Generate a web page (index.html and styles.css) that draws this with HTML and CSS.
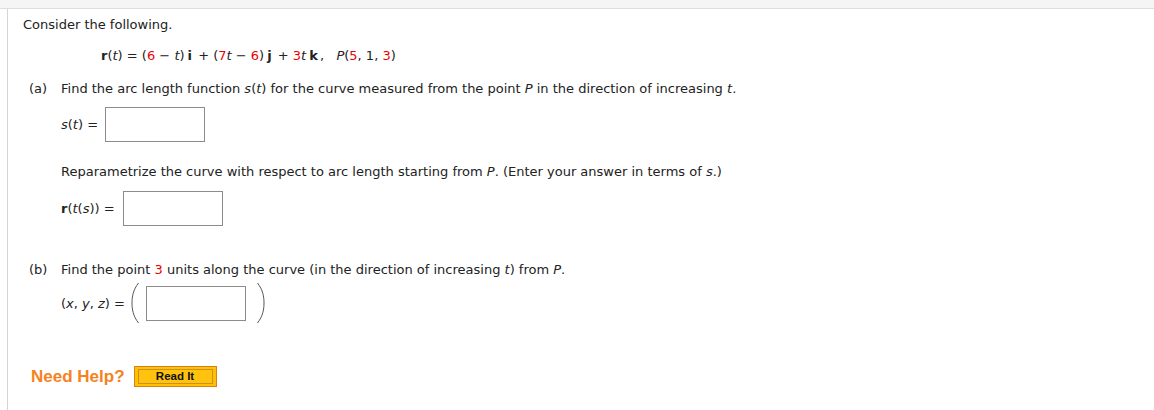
FILE: index.html
```html
<!DOCTYPE html>
<html>
<head>
<meta charset="utf-8">
<link rel="stylesheet" href="styles.css">
</head>
<body>
<div class="topbar"></div>
<div class="panel">
  <p class="intro">Consider the following.</p>
  <p class="equation"><b>r</b>(<i>t</i>) = (<span class="red">6</span> &minus; <i>t</i>)<b class="vec">i</b> + (<span class="red">7</span><i>t</i> &minus; <span class="red">6</span>)<b class="vec">j</b> + <span class="red">3</span><i>t</i><b class="vec">k</b>,&nbsp;&nbsp; <i>P</i>(<span class="red">5</span>, 1, <span class="red">3</span>)</p>

  <div class="part">
    <span class="label">(a)</span>
    <div class="body">
      <p class="q">Find the arc length function <i>s</i>(<i>t</i>) for the curve measured from the point <i>P</i> in the direction of increasing <i>t</i>.</p>
      <div class="answer a1"><span class="lhs"><i>s</i>(<i>t</i>) =</span><span class="box"></span></div>
      <p class="q q2">Reparametrize the curve with respect to arc length starting from <i>P</i>. (Enter your answer in terms of <i>s</i>.)</p>
      <div class="answer a2"><span class="lhs"><b>r</b>(<i>t</i>(<i>s</i>)) =</span><span class="box"></span></div>
    </div>
  </div>

  <div class="part partb">
    <span class="label">(b)</span>
    <div class="body">
      <p class="q">Find the point <span class="red">3</span> units along the curve (in the direction of increasing <i>t</i>) from <i>P</i>.</p>
      <div class="answer a3">
        <span class="lhs">(<i>x</i>, <i>y</i>, <i>z</i>) =</span>
        <svg class="paren" width="9" height="42" viewBox="0 0 9 42"><path d="M7.5 1 C2 8 1 15 1 21 C1 27 2 34 7.5 41" fill="none" stroke="#555" stroke-width="1"/></svg>
        <span class="box"></span>
        <svg class="paren pr" width="9" height="42" viewBox="0 0 9 42"><path d="M1.5 1 C7 8 8 15 8 21 C8 27 7 34 1.5 41" fill="none" stroke="#555" stroke-width="1"/></svg>
      </div>
    </div>
  </div>

  <div class="help">
    <span class="need">Need Help?</span>
    <span class="btn"><span class="btn-in">Read It</span></span>
  </div>
</div>
</body>
</html>
```

FILE: styles.css
```css
html, body {
  margin: 0;
  padding: 0;
  background: #fff;
}
body {
  font-family: "DejaVu Sans", Verdana, sans-serif;
  font-size: 13px;
  color: #222;
  height: 410px;
  overflow: hidden;
}
.topbar {
  height: 8px;
  background: #f5f5f5;
  border-bottom: 1px solid #dedede;
}
.panel {
  margin-left: 7px;
  border-left: 1px solid #d4d4d4;
  padding: 8px 0 0 15px;
  height: 401px;
  box-sizing: border-box;
}
p {
  margin: 0;
  line-height: 16px;
}
.red { color: #e00; }
.equation {
  margin-top: 15px;
  padding-left: 78px;
}
.vec { margin: 0 2px 0 3px; }
.part {
  display: flex;
  margin-top: 17px;
  padding-left: 6px;
}
.partb { margin-top: 36px; }
.label {
  width: 32px;
  line-height: 16px;
  flex: none;
}
.body {
  display: flex;
  flex-direction: column;
}
.answer {
  display: flex;
  align-items: center;
  margin-top: 10px;
}
.q2 { margin-top: 22px; }
.a2 { margin-top: 11px; }
.lhs {
  margin-right: 7px;
}
.a2 .lhs { margin-right: 8px; }
.box {
  display: block;
  width: 98px;
  height: 33px;
  border: 1px solid #8c8c8c;
  background: #fff;
}
.a3 { margin-top: 4px; }
.a3 .lhs { margin-right: 6px; }
.paren { display: block; margin-right: 6px; }
.paren.pr { margin-left: 10px; margin-right: 0; }
.help {
  display: flex;
  align-items: center;
  margin-top: 42px;
  padding-left: 8px;
}
.need {
  font-family: "Liberation Sans", Arial, sans-serif;
  font-weight: bold;
  font-size: 17px;
  color: #f58220;
  margin-right: 9px;
}
.btn {
  display: block;
  border: 1px solid #d5801d;
  background: #ffc000;
  padding: 2px 3px;
}
.btn-in {
  display: block;
  width: 73px;
  height: 13px;
  border: 1px solid #c99220;
  background: #ffc20e;
  font-family: "Liberation Sans", Arial, sans-serif;
  font-weight: bold;
  font-size: 11.5px;
  line-height: 13px;
  text-align: center;
  color: #111;
}
```
